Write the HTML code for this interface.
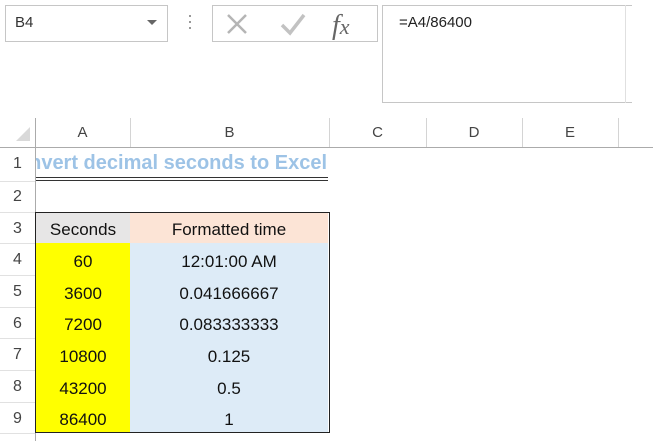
<!DOCTYPE html>
<html><head><meta charset="utf-8"><style>
*{margin:0;padding:0;box-sizing:border-box}
body{width:653px;height:441px;background:#fff;position:relative;overflow:hidden;font-family:"Liberation Sans",sans-serif;color:#222}
.a{position:absolute}
.box{position:absolute;border:1px solid #c6c6c6;background:#fff}
.vl{position:absolute;width:1px;background:#d4d4d4}
.hl{position:absolute;height:1px;background:#d4d4d4}
.ch{position:absolute;top:118px;height:29px;line-height:29px;text-align:center;font-size:15px;color:#444}
.rh{position:absolute;left:0;width:35px;text-align:center;font-size:16px;color:#444}
.c{position:absolute;text-align:center;font-size:17px;color:#111;line-height:31px}
</style></head><body>
<div class="box" style="left:5px;top:5px;width:163px;height:37px"></div>
<div class="a" style="left:15px;top:14px;font-size:15px;color:#333">B4</div>
<div class="a" style="left:147px;top:20px;width:0;height:0;border-left:5px solid transparent;border-right:5px solid transparent;border-top:5px solid #666"></div>
<div class="a" style="left:189px;top:15px;width:2px;height:2px;background:#999;box-shadow:0 6px 0 #999,0 12px 0 #999"></div>
<div class="box" style="left:212px;top:5px;width:166px;height:37px"></div>
<svg class="a" style="left:222px;top:8px" width="150" height="32">
<path d="M6 7 L24 25 M24 7 L6 25" stroke="#b5b5b5" stroke-width="2.5" fill="none"/>
<path d="M60 17 L68 25 L82 7" stroke="#c2c2c2" stroke-width="3.5" fill="none"/>
<text x="110" y="26" font-family="Liberation Serif,serif" font-style="italic" font-size="28" fill="#666">f<tspan font-size="22">x</tspan></text>
</svg>
<div class="box" style="left:382px;top:5px;width:250px;height:98px;border-right:none"></div>
<div class="a" style="left:399px;top:14px;font-size:15px;color:#222">=A4/86400</div>
<div class="vl" style="left:625px;top:5px;height:98px;background:#e0e0e0"></div>
<div class="a" style="left:0;top:118px;width:653px;height:29px;background:#fff"></div>
<svg class="a" style="left:14px;top:125px" width="18" height="18"><path d="M16 2 L16 16 L2 16 Z" fill="#d9d9d9"/></svg>
<div class="hl" style="left:0;top:147px;width:653px;background:#ababab"></div>
<div class="vl" style="left:35px;top:118px;height:323px;background:#ababab"></div>
<div class="vl" style="left:130px;top:118px;height:29px"></div>
<div class="vl" style="left:329px;top:118px;height:29px"></div>
<div class="vl" style="left:426px;top:118px;height:29px"></div>
<div class="vl" style="left:522px;top:118px;height:29px"></div>
<div class="vl" style="left:618px;top:118px;height:29px"></div>
<div class="ch" style="left:35px;width:95px">A</div>
<div class="ch" style="left:130px;width:199px">B</div>
<div class="ch" style="left:329px;width:97px">C</div>
<div class="ch" style="left:426px;width:96px">D</div>
<div class="ch" style="left:522px;width:96px">E</div>
<div class="rh" style="top:147px;height:34px;line-height:34px">1</div>
<div class="rh" style="top:181px;height:31px;line-height:31px">2</div>
<div class="rh" style="top:212px;height:31px;line-height:33px">3</div>
<div class="rh" style="top:243px;height:32px;line-height:33px">4</div>
<div class="rh" style="top:275px;height:32px;line-height:33px">5</div>
<div class="rh" style="top:307px;height:31px;line-height:33px">6</div>
<div class="rh" style="top:338px;height:32px;line-height:33px">7</div>
<div class="rh" style="top:370px;height:32px;line-height:33px">8</div>
<div class="rh" style="top:402px;height:31px;line-height:33px">9</div>
<div class="hl" style="left:0;top:181px;width:35px;background:#e1e1e1"></div>
<div class="hl" style="left:0;top:212px;width:35px;background:#e1e1e1"></div>
<div class="hl" style="left:0;top:243px;width:35px;background:#e1e1e1"></div>
<div class="hl" style="left:0;top:275px;width:35px;background:#e1e1e1"></div>
<div class="hl" style="left:0;top:307px;width:35px;background:#e1e1e1"></div>
<div class="hl" style="left:0;top:338px;width:35px;background:#e1e1e1"></div>
<div class="hl" style="left:0;top:370px;width:35px;background:#e1e1e1"></div>
<div class="hl" style="left:0;top:402px;width:35px;background:#e1e1e1"></div>
<div class="hl" style="left:0;top:433px;width:35px;background:#e1e1e1"></div>
<div class="a" style="left:36px;top:150px;width:291px;height:27px;overflow:hidden">
<div class="a" style="right:0;top:2px;white-space:nowrap;font-size:20px;font-weight:bold;color:#9dc3e6">Convert decimal seconds to Excel</div></div>
<div class="hl" style="left:36px;top:177px;width:292px;background:#333"></div>
<div class="hl" style="left:36px;top:180px;width:292px;background:#333"></div>
<div class="a" style="left:35px;top:212px;width:295px;height:221px;border:1px solid #222"></div>
<div class="a" style="left:36px;top:213px;width:94px;height:30px;background:#e7e6e6"></div>
<div class="a" style="left:130px;top:213px;width:198px;height:30px;background:#fce4d6"></div>
<div class="a" style="left:36px;top:243px;width:94px;height:189px;background:#ffff00"></div>
<div class="a" style="left:130px;top:243px;width:198px;height:189px;background:#ddebf7"></div>
<div class="c" style="left:36px;top:214px;width:94px">Seconds</div>
<div class="c" style="left:130px;top:214px;width:198px">Formatted time</div>
<div class="c" style="left:36px;top:246px;width:94px">60</div>
<div class="c" style="left:130px;top:246px;width:198px">12:01:00 AM</div>
<div class="c" style="left:36px;top:278px;width:94px">3600</div>
<div class="c" style="left:130px;top:278px;width:198px">0.041666667</div>
<div class="c" style="left:36px;top:309px;width:94px">7200</div>
<div class="c" style="left:130px;top:309px;width:198px">0.083333333</div>
<div class="c" style="left:36px;top:341px;width:94px">10800</div>
<div class="c" style="left:130px;top:341px;width:198px">0.125</div>
<div class="c" style="left:36px;top:373px;width:94px">43200</div>
<div class="c" style="left:130px;top:373px;width:198px">0.5</div>
<div class="c" style="left:36px;top:404px;width:94px">86400</div>
<div class="c" style="left:130px;top:404px;width:198px">1</div>
</body></html>
